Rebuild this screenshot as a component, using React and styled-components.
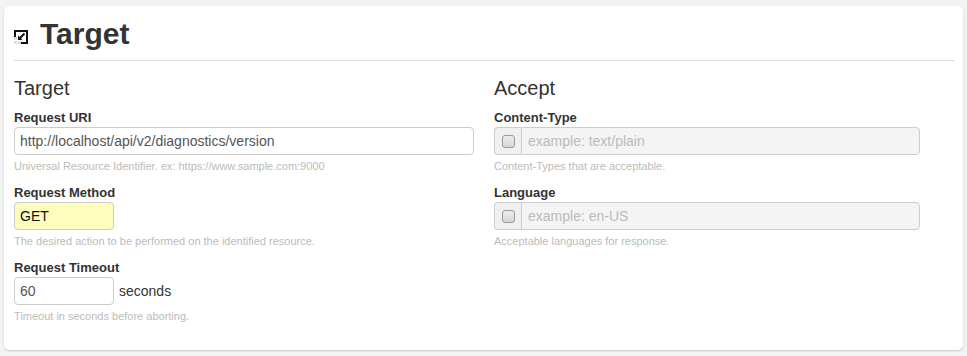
import React from "react";
import styled, { createGlobalStyle } from "styled-components";

const Global = createGlobalStyle`
  html, body {
    margin: 0;
    padding: 0;
    background: #f2f3f3;
    font-family: "Liberation Sans", Arial, sans-serif;
    color: #333;
  }
  * { box-sizing: border-box; }
`;

const Page = styled.div`
  padding: 6px 4px 6px 4px;
`;

const Card = styled.div`
  background: #fff;
  border-radius: 5px;
  box-shadow: 0 1px 2px rgba(0, 0, 0, 0.18);
  padding: 10px 8px 14px 10px;
  height: 344px;
`;

const Header = styled.div`
  display: flex;
  align-items: center;
  padding-bottom: 8px;
  border-bottom: 1px solid #dedede;
`;

const Title = styled.h1`
  margin: 0;
  font-size: 30px;
  line-height: 36px;
  font-weight: bold;
  color: #333;
`;

const IconBox = styled.span`
  display: inline-flex;
  width: 14px;
  height: 14px;
  margin: 5px 12px 0 0;
`;

const Columns = styled.div`
  display: grid;
  grid-template-columns: 480px 1fr;
  padding-top: 15px;
`;

const Section = styled.div``;

const SectionTitle = styled.h3`
  margin: 0 0 8px;
  font-size: 20px;
  line-height: 24px;
  font-weight: normal;
  color: #333;
`;

const Group = styled.div`
  margin-bottom: 9px;
`;

const Label = styled.label`
  display: block;
  font-size: 13px;
  line-height: 19px;
  font-weight: bold;
  color: #333;
`;

const Row = styled.div`
  display: flex;
  align-items: center;
  gap: 5px;
`;

const Input = styled.input`
  display: block;
  width: ${(p) => p.$w}px;
  height: 28px;
  padding: 0 5px;
  border: 1px solid #ccc;
  border-radius: 4px;
  background: ${(p) => (p.$hl ? "#fdfdbd" : "#fff")};
  font-family: "Liberation Sans", Arial, sans-serif;
  font-size: 14px;
  color: ${(p) => (p.$hl ? "#111" : "#555")};
  outline: none;
`;

const Unit = styled.span`
  font-size: 14px;
  color: #333;
`;

const Help = styled.div`
  margin-top: 4px;
  font-size: 11px;
  line-height: 15px;
  color: #bbb;
`;

const InputGroup = styled.div`
  display: flex;
  width: 426px;
  height: 28px;
`;

const Addon = styled.span`
  display: flex;
  align-items: center;
  justify-content: center;
  width: 27px;
  border: 1px solid #ccc;
  border-right: none;
  border-radius: 4px 0 0 4px;
  background: #f0f0f0;
`;

const FakeCheck = styled.span`
  width: 13px;
  height: 13px;
  border: 1px solid #9a9a9a;
  border-radius: 3px;
  background: linear-gradient(#ececec, #d6d6d6);
`;

const GroupInput = styled.input`
  flex: 1;
  min-width: 0;
  padding: 0 6px;
  border: 1px solid #ccc;
  border-radius: 0 4px 4px 0;
  background: #f4f4f4;
  font-family: "Liberation Sans", Arial, sans-serif;
  font-size: 14px;
  color: #555;
  outline: none;
  &::placeholder { color: #bbb; }
`;

function CollapseIcon() {
  return (
    <svg width="14" height="14" viewBox="0 0 14 14" shapeRendering="crispEdges">
      <rect x="0" y="7" width="7" height="7" fill="#ddd" />
      <path d="M3.5 7v7M0 10.5h7" stroke="#fff" strokeWidth="1" />
      <path d="M1 7V1h12v12H7" stroke="#111" strokeWidth="2" fill="none" />
      <path d="M10.5 3.5L5.5 8.5" stroke="#111" strokeWidth="2" shapeRendering="auto" />
      <path d="M4 5.5V10H8.5Z" fill="#111" shapeRendering="auto" />
    </svg>
  );
}

function Field({ label, help, children }) {
  return (
    <Group>
      <Label>{label}</Label>
      {children}
      <Help>{help}</Help>
    </Group>
  );
}

export default function App() {
  return (
    <>
      <Global />
      <Page>
        <Card>
          <Header>
            <IconBox><CollapseIcon /></IconBox>
            <Title>Target</Title>
          </Header>
          <Columns>
            <Section>
              <SectionTitle>Target</SectionTitle>
              <Field label="Request URI" help="Universal Resource Identifier. ex: https://www.sample.com:9000">
                <Input $w={460} defaultValue="http://localhost/api/v2/diagnostics/version" />
              </Field>
              <Field label="Request Method" help="The desired action to be performed on the identified resource.">
                <Input $w={100} $hl defaultValue="GET" />
              </Field>
              <Field label="Request Timeout" help="Timeout in seconds before aborting.">
                <Row>
                  <Input $w={100} defaultValue="60" />
                  <Unit>seconds</Unit>
                </Row>
              </Field>
            </Section>
            <Section>
              <SectionTitle>Accept</SectionTitle>
              <Field label="Content-Type" help="Content-Types that are acceptable.">
                <InputGroup>
                  <Addon><FakeCheck /></Addon>
                  <GroupInput placeholder="example: text/plain" />
                </InputGroup>
              </Field>
              <Field label="Language" help="Acceptable languages for response.">
                <InputGroup>
                  <Addon><FakeCheck /></Addon>
                  <GroupInput placeholder="example: en-US" />
                </InputGroup>
              </Field>
            </Section>
          </Columns>
        </Card>
      </Page>
    </>
  );
}
